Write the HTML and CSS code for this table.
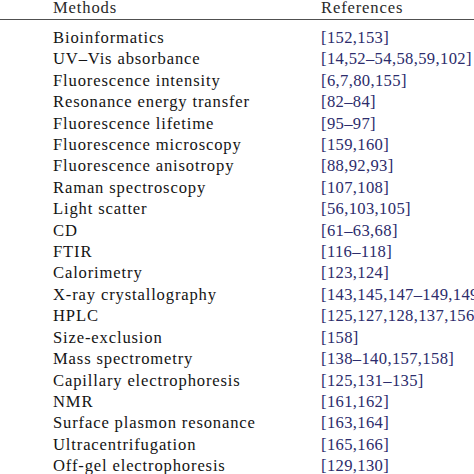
FILE: index.html
```html
<!DOCTYPE html>
<html>
<head>
<meta charset="utf-8">
<link rel="stylesheet" href="styles.css">
</head>
<body>
<div class="table">
  <div class="head">
    <span class="cell">Methods</span>
    <span class="cell">References</span>
  </div>
  <div class="body">
    <span class="cell">Bioinformatics</span><span class="cell ref">[152,153]</span>
    <span class="cell">UV–Vis absorbance</span><span class="cell ref">[14,52–54,58,59,102]</span>
    <span class="cell">Fluorescence intensity</span><span class="cell ref">[6,7,80,155]</span>
    <span class="cell">Resonance energy transfer</span><span class="cell ref">[82–84]</span>
    <span class="cell">Fluorescence lifetime</span><span class="cell ref">[95–97]</span>
    <span class="cell">Fluorescence microscopy</span><span class="cell ref">[159,160]</span>
    <span class="cell">Fluorescence anisotropy</span><span class="cell ref">[88,92,93]</span>
    <span class="cell">Raman spectroscopy</span><span class="cell ref">[107,108]</span>
    <span class="cell">Light scatter</span><span class="cell ref">[56,103,105]</span>
    <span class="cell">CD</span><span class="cell ref">[61–63,68]</span>
    <span class="cell">FTIR</span><span class="cell ref">[116–118]</span>
    <span class="cell">Calorimetry</span><span class="cell ref">[123,124]</span>
    <span class="cell">X-ray crystallography</span><span class="cell ref">[143,145,147–149,149]</span>
    <span class="cell">HPLC</span><span class="cell ref">[125,127,128,137,156,157]</span>
    <span class="cell">Size-exclusion</span><span class="cell ref">[158]</span>
    <span class="cell">Mass spectrometry</span><span class="cell ref">[138–140,157,158]</span>
    <span class="cell">Capillary electrophoresis</span><span class="cell ref">[125,131–135]</span>
    <span class="cell">NMR</span><span class="cell ref">[161,162]</span>
    <span class="cell">Surface plasmon resonance</span><span class="cell ref">[163,164]</span>
    <span class="cell">Ultracentrifugation</span><span class="cell ref">[165,166]</span>
    <span class="cell">Off-gel electrophoresis</span><span class="cell ref">[129,130]</span>
  </div>
</div>
</body>
</html>
```
FILE: styles.css
```css
html, body {
  margin: 0;
  padding: 0;
  background: #ffffff;
  overflow: hidden;
}
body {
  width: 474px;
  height: 474px;
  font-family: "Liberation Serif", "Times New Roman", serif;
  font-size: 16.6px;
  letter-spacing: 0.85px;
  color: #141414;
  line-height: 21.4px;
}
.table {
  margin-top: -3px;
}
.head {
  display: grid;
  grid-template-columns: 268px auto;
  padding-left: 53px;
  padding-bottom: 0.6px;
  border-bottom: 1.5px solid #505050;
  color: #2a2a2a;
}
.body {
  display: grid;
  grid-template-columns: 268px auto;
  padding-left: 53px;
  padding-top: 7px;
}
.cell {
  white-space: nowrap;
}
.ref {
  color: #2c2c6c;
  letter-spacing: 0.35px;
}
```
